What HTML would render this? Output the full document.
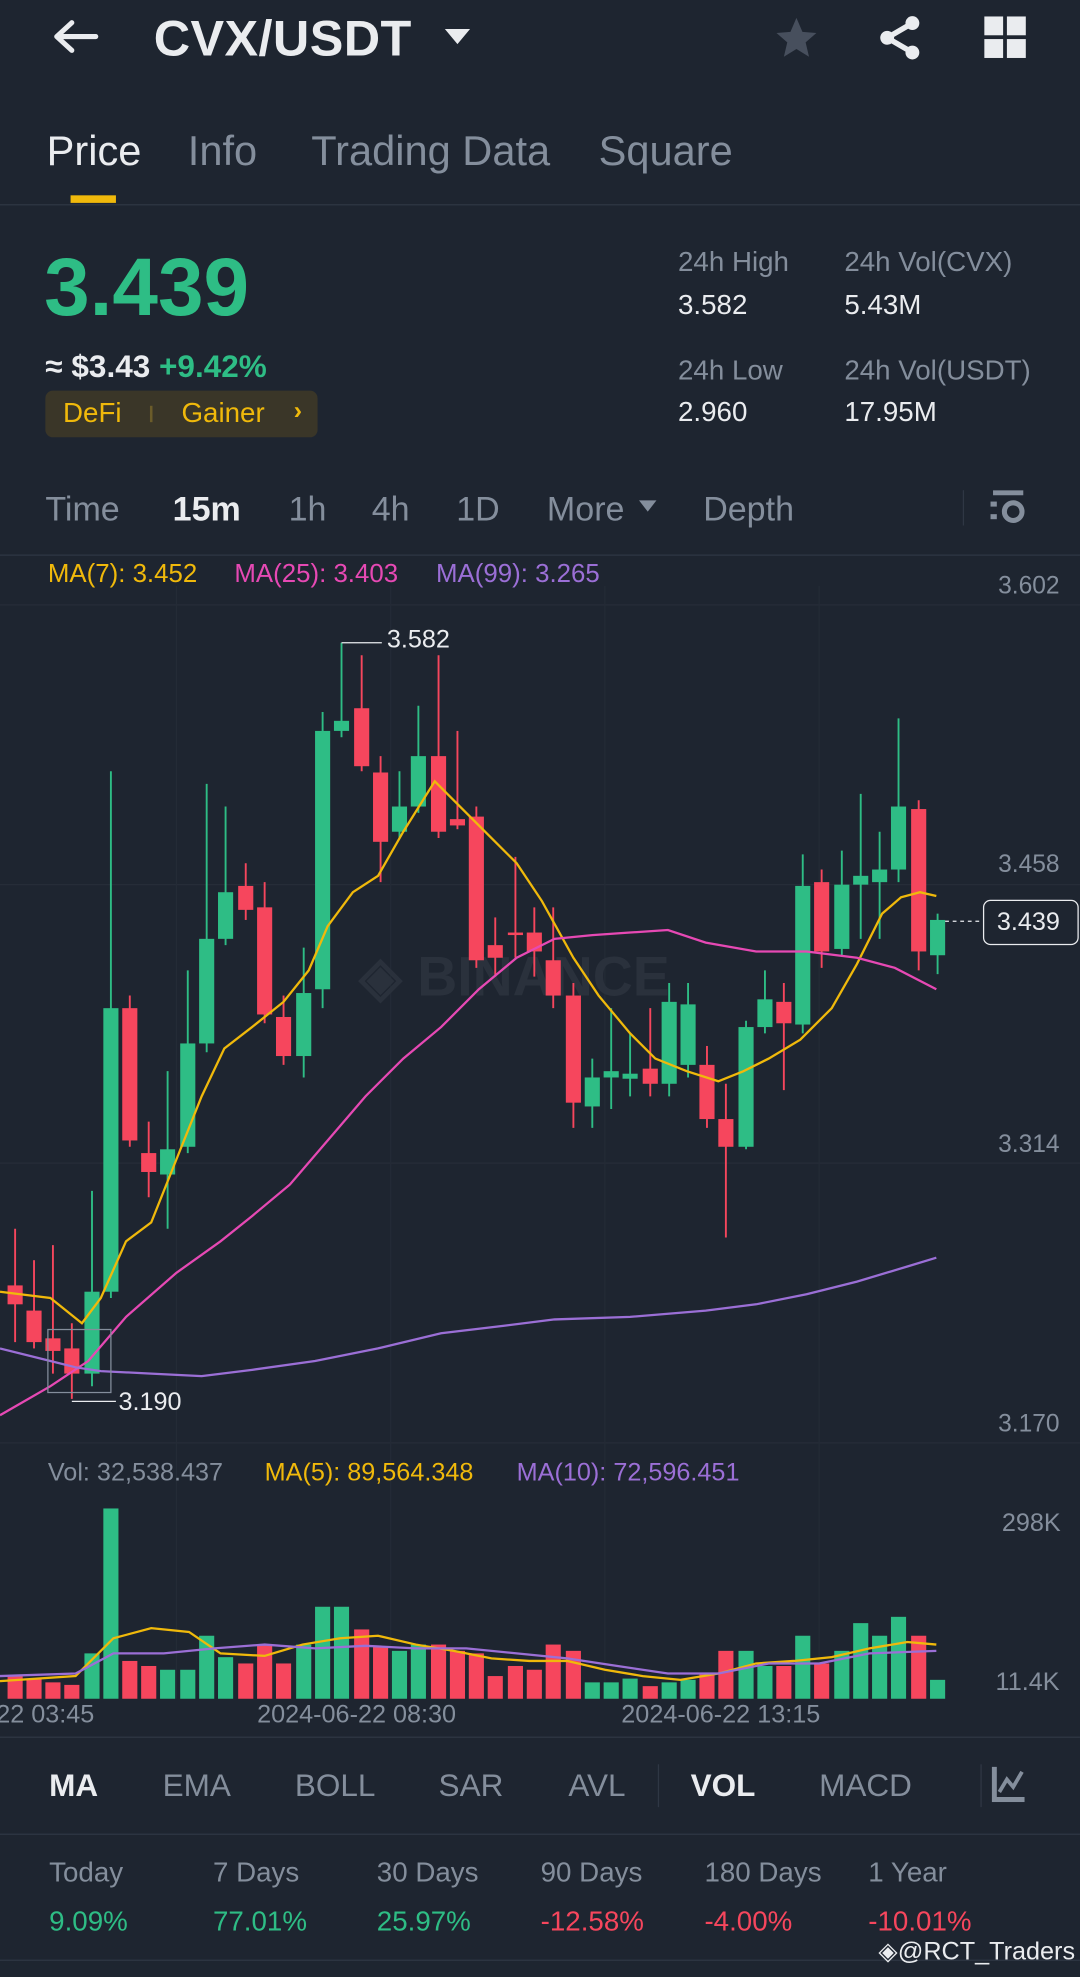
<!DOCTYPE html>
<html><head><meta charset="utf-8"><style>
html,body{margin:0;padding:0;background:#1e2530;overflow:hidden}
body{width:1080px;height:1977px;position:relative;font-family:"Liberation Sans",sans-serif}
#w{position:absolute;left:0;top:0;width:857px;height:1569px;transform:scale(1.2602);transform-origin:0 0}
.t{position:absolute;white-space:nowrap;line-height:1}
.g{color:#848e9c}.wh{color:#eaecef}.gr{color:#2ebd85}.rd{color:#f6465d}
.hl{position:absolute;left:0;width:857px;height:1px;background:#2f3744}
</style></head><body><div id="w">
<!-- header -->
<svg class="t" style="left:40px;top:14px" width="40" height="30" viewBox="0 0 40 30"><path d="M36 15H6M17 4L5 15l12 11" stroke="#eaecef" stroke-width="4" fill="none" stroke-linecap="round" stroke-linejoin="round"/></svg>
<div class="t wh" style="left:122px;top:11px;font-size:40px;font-weight:bold;letter-spacing:0.3px">CVX/USDT</div>
<svg class="t" style="left:352px;top:22px" width="22" height="14"><path d="M1 1h20L11 13z" fill="#eaecef"/></svg>
<svg class="t" style="left:613px;top:11px" width="38" height="38" viewBox="0 0 24 24"><path d="M12 2l3 7 7 .6-5.4 4.7 1.7 7.2L12 17.6 5.7 21.5l1.7-7.2L2 9.6 9 9z" fill="#474f5d"/></svg>
<svg class="t" style="left:694px;top:10px" width="40" height="40" viewBox="0 0 24 24"><circle cx="18" cy="5" r="3.3" fill="#eaecef"/><circle cx="6" cy="12" r="3.3" fill="#eaecef"/><circle cx="18" cy="19" r="3.3" fill="#eaecef"/><path d="M18 5L6 12l12 7" stroke="#eaecef" stroke-width="2.6" fill="none"/></svg>
<svg class="t" style="left:781px;top:13px" width="34" height="34"><rect x="0" y="0" width="15" height="15" fill="#eaecef"/><rect x="18" y="0" width="15" height="15" fill="#eaecef"/><rect x="0" y="18" width="15" height="15" fill="#eaecef"/><rect x="18" y="18" width="15" height="15" fill="#eaecef"/></svg>
<!-- tabs -->
<div class="t wh" style="left:37px;top:103px;font-size:33px">Price</div>
<div class="t g" style="left:149px;top:103px;font-size:33px">Info</div>
<div class="t g" style="left:247px;top:103px;font-size:33px">Trading Data</div>
<div class="t g" style="left:475px;top:103px;font-size:33px">Square</div>
<div class="t" style="left:56px;top:155px;width:36px;height:6px;background:#f0b90b"></div>
<div class="hl" style="top:162px"></div>
<!-- price -->
<div class="t gr" style="left:35px;top:195px;font-size:65px;font-weight:bold">3.439</div>
<div class="t wh" style="left:36px;top:279px;font-size:25px;font-weight:bold">≈ $3.43 <span class="gr">+9.42%</span></div>
<div class="t" style="left:36px;top:310px;width:216px;height:37px;background:#3a3628;border-radius:6px"></div>
<div class="t" style="left:50px;top:317px;font-size:22px;color:#f0b90b">DeFi</div>
<div class="t" style="left:119px;top:322px;width:2px;height:13px;background:#6b5c2a"></div>
<div class="t" style="left:144px;top:317px;font-size:22px;color:#f0b90b">Gainer</div>
<div class="t" style="left:233px;top:316px;font-size:20px;color:#f0b90b;font-weight:bold">›</div>
<div class="t g" style="left:538px;top:197px;font-size:22px">24h High</div>
<div class="t wh" style="left:538px;top:231px;font-size:22px">3.582</div>
<div class="t g" style="left:670px;top:197px;font-size:22px">24h Vol(CVX)</div>
<div class="t wh" style="left:670px;top:231px;font-size:22px">5.43M</div>
<div class="t g" style="left:538px;top:283px;font-size:22px">24h Low</div>
<div class="t wh" style="left:538px;top:316px;font-size:22px">2.960</div>
<div class="t g" style="left:670px;top:283px;font-size:22px">24h Vol(USDT)</div>
<div class="t wh" style="left:670px;top:316px;font-size:22px">17.95M</div>
<!-- timeframe -->
<div class="t g" style="left:36px;top:391px;font-size:27px">Time</div>
<div class="t wh" style="left:137px;top:391px;font-size:27px;font-weight:bold">15m</div>
<div class="t g" style="left:229px;top:391px;font-size:27px">1h</div>
<div class="t g" style="left:295px;top:391px;font-size:27px">4h</div>
<div class="t g" style="left:362px;top:391px;font-size:27px">1D</div>
<div class="t g" style="left:434px;top:391px;font-size:27px">More</div>
<svg class="t" style="left:507px;top:397px" width="14" height="10"><path d="M0 0h14L7 9z" fill="#848e9c"/></svg>
<div class="t g" style="left:558px;top:391px;font-size:27px">Depth</div>
<div class="t" style="left:764px;top:389px;width:1px;height:28px;background:#2f3744"></div>
<svg class="t" style="left:786px;top:389px" width="30" height="30"><rect x="2" y="0" width="24" height="4" fill="#848e9c"/><rect x="0" y="9" width="5" height="4" fill="#848e9c"/><rect x="0" y="19" width="5" height="4" fill="#848e9c"/><circle cx="18" cy="17" r="7" fill="none" stroke="#848e9c" stroke-width="4"/></svg>
<div class="hl" style="top:440px"></div>
<!-- MA legend -->
<div class="t" style="left:38px;top:446px;font-size:20.5px;color:#f0b90b">MA(7): 3.452</div>
<div class="t" style="left:186px;top:446px;font-size:20.5px;color:#e649b4">MA(25): 3.403</div>
<div class="t" style="left:346px;top:446px;font-size:20.5px;color:#9b6fd6">MA(99): 3.265</div>
<svg id="ch" class="t" style="left:0;top:0" width="857" height="1380"></svg>
<div class="t g" style="left:792px;top:456px;font-size:19.5px">3.602</div>
<div class="t g" style="left:792px;top:677px;font-size:19.5px">3.458</div>
<div class="t g" style="left:792px;top:899px;font-size:19.5px">3.314</div>
<div class="t g" style="left:792px;top:1121px;font-size:19.5px">3.170</div>
<div class="t wh" style="left:307px;top:498px;font-size:20px">3.582</div>
<div class="t wh" style="left:94px;top:1103px;font-size:20px">3.190</div>
<div class="t" style="left:780px;top:714px;width:74px;height:34px;border:1px solid #eaecef;border-radius:6px;background:#1e2530"></div>
<div class="t wh" style="left:791px;top:722px;font-size:20px">3.439</div>
<div class="t g" style="left:38px;top:1159px;font-size:20px">Vol: 32,538.437</div>
<div class="t" style="left:210px;top:1159px;font-size:20px;color:#f0b90b">MA(5): 89,564.348</div>
<div class="t" style="left:410px;top:1159px;font-size:20px;color:#9b6fd6">MA(10): 72,596.451</div>
<div class="t g" style="left:795px;top:1199px;font-size:20px">298K</div>
<div class="t g" style="left:790px;top:1325px;font-size:20px">11.4K</div>
<div class="t g" style="left:-3px;top:1351px;font-size:20px">22 03:45</div>
<div class="t g" style="left:204px;top:1351px;font-size:20px">2024-06-22 08:30</div>
<div class="t g" style="left:493px;top:1351px;font-size:20px">2024-06-22 13:15</div>
<div class="hl" style="top:1378px"></div>
<!-- indicators -->
<div class="t wh" style="left:39px;top:1405px;font-size:25px;font-weight:bold">MA</div>
<div class="t g" style="left:129px;top:1405px;font-size:25px">EMA</div>
<div class="t g" style="left:234px;top:1405px;font-size:25px">BOLL</div>
<div class="t g" style="left:348px;top:1405px;font-size:25px">SAR</div>
<div class="t g" style="left:451px;top:1405px;font-size:25px">AVL</div>
<div class="t" style="left:522px;top:1400px;width:1px;height:34px;background:#2f3744"></div>
<div class="t wh" style="left:548px;top:1405px;font-size:25px;font-weight:bold">VOL</div>
<div class="t g" style="left:650px;top:1405px;font-size:25px">MACD</div>
<div class="t" style="left:778px;top:1400px;width:1px;height:34px;background:#2f3744"></div>
<svg class="t" style="left:787px;top:1402px" width="28" height="28"><path d="M2 0v26h24" stroke="#848e9c" stroke-width="4" fill="none"/><path d="M6 20l6-10 5 6 7-12" stroke="#848e9c" stroke-width="3" fill="none"/></svg>
<div class="hl" style="top:1455px"></div>
<!-- perf -->
<div class="t g" style="left:39px;top:1475px;font-size:22px">Today</div>
<div class="t g" style="left:169px;top:1475px;font-size:22px">7 Days</div>
<div class="t g" style="left:299px;top:1475px;font-size:22px">30 Days</div>
<div class="t g" style="left:429px;top:1475px;font-size:22px">90 Days</div>
<div class="t g" style="left:559px;top:1475px;font-size:22px">180 Days</div>
<div class="t g" style="left:689px;top:1475px;font-size:22px">1 Year</div>
<div class="t gr" style="left:39px;top:1514px;font-size:22px">9.09%</div>
<div class="t gr" style="left:169px;top:1514px;font-size:22px">77.01%</div>
<div class="t gr" style="left:299px;top:1514px;font-size:22px">25.97%</div>
<div class="t rd" style="left:429px;top:1514px;font-size:22px">-12.58%</div>
<div class="t rd" style="left:559px;top:1514px;font-size:22px">-4.00%</div>
<div class="t rd" style="left:689px;top:1514px;font-size:22px">-10.01%</div>
<div class="hl" style="top:1555px"></div>
<div class="t wh" style="left:697px;top:1539px;font-size:20px">◈@RCT_Traders</div>
</div>
<script>
var C=[[12,'r',1020,1035,975,1065],[27,'r',1040,1065,1000,1070],[42,'r',1062,1072,988,1090],[57,'r',1070,1090,1050,1110],[73,'g',1025,1090,945,1100],[88,'g',800,1025,612,1030],[103,'r',800,905,790,910],[118,'r',915,930,890,950],[133,'g',912,932,850,975],[149,'g',828,910,770,915],[164,'g',745,828,622,835],[179,'g',708,745,640,750],[195,'r',703,722,685,730],[210,'r',720,805,700,812],[225,'r',807,838,790,845],[241,'g',788,838,752,855],[256,'g',580,785,565,800],[271,'g',572,580,510,585],[287,'r',562,608,520,612],[302,'r',613,668,600,700],[317,'g',640,660,612,665],[332,'g',600,640,560,645],[348,'r',600,660,520,665],[363,'r',650,655,580,658],[378,'r',648,762,640,768],[393,'r',750,760,728,775],[409,'r',740,742,680,760],[424,'r',740,755,720,775],[439,'r',762,790,720,800],[455,'r',790,875,780,895],[470,'g',855,878,840,895],[485,'g',850,855,800,880],[500,'g',852,856,820,870],[516,'r',848,860,800,870],[531,'g',795,860,780,870],[546,'g',797,845,780,855],[561,'r',845,888,830,895],[576,'r',888,910,860,982],[592,'g',815,910,810,912],[607,'g',793,815,770,820],[622,'r',795,812,780,865],[637,'g',703,813,678,820],[652,'r',700,755,690,768],[668,'g',702,753,675,758],[683,'g',695,702,630,745],[698,'g',690,700,660,745],[713,'g',640,690,570,700],[729,'r',642,755,635,770],[744,'g',730,758,725,773]];
var V=[1330,1332,1335,1337,1312,1197,1318,1322,1325,1325,1298,1315,1320,1305,1320,1305,1275,1275,1293,1307,1310,1305,1305,1310,1312,1330,1322,1325,1305,1310,1335,1335,1332,1338,1335,1333,1328,1310,1310,1322,1322,1298,1320,1310,1288,1298,1283,1298,1333];
var s='';
[480,702,923,1145].forEach(function(y){s+='<line x1="0" x2="857" y1="'+y+'" y2="'+y+'" stroke="#262d38"/>';});
[140,310,480,650].forEach(function(x){s+='<line x1="'+x+'" x2="'+x+'" y1="465" y2="1348" stroke="#242b36"/>';});
s+='<text x="285" y="790" font-size="44" font-weight="bold" fill="#2a313c" font-family="Liberation Sans">◈ BINANCE</text>';
C.forEach(function(c,i){var col=c[1]=='g'?'#2ebd85':'#f6465d';
s+='<line x1="'+c[0]+'" x2="'+c[0]+'" y1="'+c[4]+'" y2="'+c[5]+'" stroke="'+col+'" stroke-width="1.5"/>';
s+='<rect x="'+(c[0]-6)+'" y="'+c[2]+'" width="12" height="'+Math.max(2,c[3]-c[2])+'" fill="'+col+'"/>';
s+='<rect x="'+(c[0]-6)+'" y="'+V[i]+'" width="12" height="'+(1348-V[i])+'" fill="'+col+'"/>';});
function pl(p,c){return '<polyline fill="none" stroke="'+c+'" stroke-width="1.8" points="'+p+'"/>';}
s+=pl('0,1025 40,1030 65,1050 80,1030 100,985 120,970 140,920 160,870 178,832 200,815 225,795 245,770 260,735 280,708 300,695 320,660 345,620 365,640 390,665 410,685 430,715 455,760 475,790 500,820 520,840 545,850 570,858 590,850 610,840 635,825 660,800 680,765 700,725 715,712 730,708 743,711','#f0b90b');
s+=pl('0,1123 40,1100 70,1080 100,1045 140,1010 175,985 200,965 230,940 260,905 290,870 320,840 350,815 380,785 410,760 440,745 470,742 500,740 530,738 560,748 600,755 640,755 680,760 710,768 743,785','#e649b4');
s+=pl('0,1070 40,1080 60,1085 80,1088 120,1090 160,1092 200,1087 250,1080 300,1070 350,1058 400,1052 440,1047 500,1045 560,1040 600,1035 640,1027 680,1017 720,1005 743,998','#9b6fd6');
s+=pl('0,1334 60,1330 90,1300 120,1292 150,1295 175,1312 210,1314 240,1305 270,1300 300,1298 330,1305 360,1310 390,1316 420,1318 450,1318 480,1325 510,1330 540,1333 570,1328 600,1320 630,1318 660,1315 690,1308 720,1303 743,1305','#f0b90b');
s+=pl('0,1330 60,1328 90,1312 130,1312 170,1308 210,1305 250,1308 290,1306 330,1308 370,1308 410,1312 450,1316 490,1322 530,1328 570,1328 610,1320 650,1320 690,1312 743,1310','#9b6fd6');
s+='<rect x="38" y="1055" width="50" height="50" fill="none" stroke="#848e9c" stroke-width="1"/>';
s+='<line x1="271" x2="303" y1="510" y2="510" stroke="#eaecef"/><line x1="57" x2="92" y1="1112" y2="1112" stroke="#eaecef"/>';
s+='<line x1="750" x2="780" y1="731" y2="731" stroke="#eaecef" stroke-dasharray="3,3"/>';
document.getElementById('ch').innerHTML=s;
</script>
</body></html>
